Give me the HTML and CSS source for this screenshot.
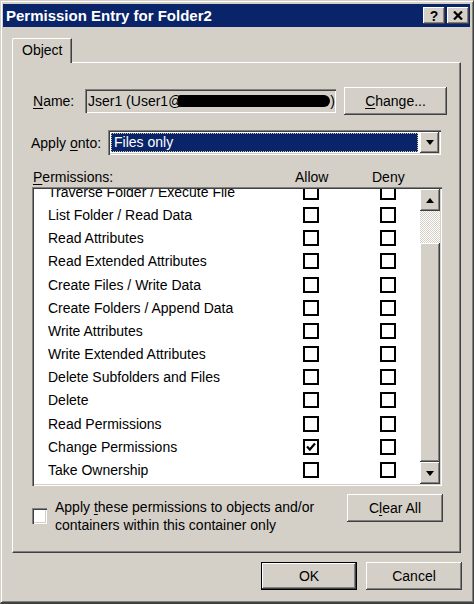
FILE: index.html
```html
<!DOCTYPE html>
<html>
<head>
<meta charset="utf-8">
<title>Permission Entry for Folder2</title>
<link rel="stylesheet" href="styles.css">
</head>
<body>
<div class="window">
  <div class="titlebar">
    <span class="title">Permission Entry for Folder2</span>
    <div class="title-btns">
      <span class="tbtn help">?</span>
      <span class="tbtn close"><svg width="10" height="9" viewBox="0 0 10 9"><path d="M1 0.5 L9 8.5 M9 0.5 L1 8.5" stroke="#000" stroke-width="2.2"/></svg></span>
    </div>
  </div>
  <div class="client">
    <div class="tabs"><div class="tab">Object</div></div>
    <div class="panel">
      <div class="name-row">
        <span class="lbl name-lbl"><u>N</u>ame:</span>
        <div class="field">Jser1 (User1@<span class="redact"></span>)</div>
        <button class="btn change-btn"><u>C</u>hange...</button>
      </div>
      <div class="apply-row">
        <span class="lbl apply-lbl">Apply <u>o</u>nto:</span>
        <div class="combo">
          <div class="combo-sel">Files only</div>
          <span class="combo-btn"><span class="tri-down"></span></span>
        </div>
      </div>
      <div class="perm-head">
        <span><u>P</u>ermissions:</span>
        <span>Allow</span>
        <span>Deny</span>
      </div>
      <div class="list">
        <div class="list-view">
          <div class="rows">
            <div class="prow"><span>Traverse Folder / Execute File</span><span class="cb"></span><span class="cb"></span></div>
            <div class="prow"><span>List Folder / Read Data</span><span class="cb"></span><span class="cb"></span></div>
            <div class="prow"><span>Read Attributes</span><span class="cb"></span><span class="cb"></span></div>
            <div class="prow"><span>Read Extended Attributes</span><span class="cb"></span><span class="cb"></span></div>
            <div class="prow"><span>Create Files / Write Data</span><span class="cb"></span><span class="cb"></span></div>
            <div class="prow"><span>Create Folders / Append Data</span><span class="cb"></span><span class="cb"></span></div>
            <div class="prow"><span>Write Attributes</span><span class="cb"></span><span class="cb"></span></div>
            <div class="prow"><span>Write Extended Attributes</span><span class="cb"></span><span class="cb"></span></div>
            <div class="prow"><span>Delete Subfolders and Files</span><span class="cb"></span><span class="cb"></span></div>
            <div class="prow"><span>Delete</span><span class="cb"></span><span class="cb"></span></div>
            <div class="prow"><span>Read Permissions</span><span class="cb"></span><span class="cb"></span></div>
            <div class="prow"><span>Change Permissions</span><span class="cb checked"><svg width="12" height="12" viewBox="0 0 12 12"><path d="M2 5.5 L4.8 8.5 L10 2.5" fill="none" stroke="#000" stroke-width="2.2"/></svg></span><span class="cb"></span></div>
            <div class="prow"><span>Take Ownership</span><span class="cb"></span><span class="cb"></span></div>
          </div>
        </div>
        <div class="vscroll">
          <span class="sbtn"><span class="tri-up"></span></span>
          <span class="strack"></span>
          <span class="sthumb"></span>
          <span class="sbtn"><span class="tri-down"></span></span>
        </div>
      </div>
      <div class="bottom-row">
        <div class="apply-check">
          <span class="chk"></span>
          <span class="chk-text">Apply <u>t</u>hese permissions to objects and/or<br>containers within this container only</span>
        </div>
        <button class="btn clear-btn">C<u>l</u>ear All</button>
      </div>
    </div>
    <div class="dlg-btns">
      <button class="btn default">OK</button>
      <button class="btn">Cancel</button>
    </div>
  </div>
</div>
</body>
</html>
```
FILE: styles.css
```css
body {
  margin: 0;
  background: #d4d0c8;
  font-family: "Liberation Sans", Arial, sans-serif;
  font-size: 14px;
  color: #000;
}

u { text-decoration: underline; text-underline-offset: 2px; }

.window {
  box-sizing: border-box;
  width: 474px;
  height: 604px;
  border: 1px solid;
  border-bottom-width: 2px;
  border-color: #d4d0c8 #404040 #404040 #d4d0c8;
  box-shadow: inset 1px 1px #fff, inset -1px -1px #808080;
  padding: 3px 3px 2px 2px;
  background: #d4d0c8;
  display: flex;
  flex-direction: column;
}

.titlebar {
  height: 23px;
  flex: none;
  background: #0a246a;
  display: flex;
  align-items: center;
  justify-content: space-between;
  padding-left: 3px;
  color: #fff;
  font-weight: bold;
  font-size: 15px;
}

.title-btns { display: flex; gap: 2px; margin-right: 1px; }

.tbtn {
  box-sizing: border-box;
  width: 22px;
  height: 17px;
  background: #d4d0c8;
  box-shadow: inset -1px -1px #404040, inset 1px 1px #fff, inset -2px -2px #808080;
  display: flex;
  align-items: center;
  justify-content: center;
  color: #000;
  font-weight: bold;
  font-size: 14px;
  line-height: 1;
}

.client {
  flex: 1;
  padding: 11px 9px 0 9px;
  display: flex;
  flex-direction: column;
}

.tabs { display: flex; position: relative; z-index: 1; }

.tab {
  box-sizing: border-box;
  width: 60px;
  height: 25px;
  border-top: 1px solid #fff;
  border-left: 1px solid #fff;
  border-right: 1px solid #404040;
  border-top-left-radius: 2px;
  box-shadow: inset -1px 0 #808080;
  padding-left: 9px;
  line-height: 22px;
  background: #d4d0c8;
}

.panel {
  box-sizing: border-box;
  height: 491px;
  margin-top: -1px;
  border: 1px solid;
  border-color: #fff #404040 #404040 #fff;
  box-shadow: inset -1px -1px #808080;
  padding: 24px 12px 0 20px;
}

.name-row { display: flex; align-items: center; height: 28px; }
.name-lbl { width: 52px; }

.field {
  box-sizing: border-box;
  width: 251px;
  height: 24px;
  background: #d4d0c8;
  box-shadow: inset 1px 1px #808080, inset 2px 2px #404040, inset -1px -1px #fff, inset -2px -2px #d4d0c8;
  padding-left: 3px;
  display: flex;
  align-items: center;
  white-space: nowrap;
  overflow: hidden;
}

.redact {
  display: inline-block;
  width: 152px;
  height: 12px;
  margin-left: -4px;
  background: #000;
  border-radius: 3px 7px 7px 3px;
}

.btn {
  font: inherit;
  box-sizing: border-box;
  background: #d4d0c8;
  border: 0;
  box-shadow: inset -1px -1px #404040, inset 1px 1px #fff, inset -2px -2px #808080;
  padding: 0;
  color: #000;
  height: 28px;
}

.change-btn { width: 103px; margin-left: 8px; }

.apply-row { display: flex; align-items: center; height: 25px; margin-top: 15px; }
.apply-lbl { width: 77px; margin-left: -2px; }

.combo {
  box-sizing: border-box;
  width: 333px;
  height: 25px;
  background: #fff;
  box-shadow: inset 1px 1px #808080, inset 2px 2px #404040, inset -1px -1px #fff, inset -2px -2px #d4d0c8;
  padding: 2px;
  display: flex;
}

.combo-sel {
  flex: 1;
  margin: 1px 2px 1px 1px;
  background: #0a246a;
  color: #fff;
  outline: 1px dotted #c8c8a0;
  outline-offset: -1px;
  padding-left: 3px;
  line-height: 19px;
}

.combo-btn {
  box-sizing: border-box;
  width: 19px;
  background: #d4d0c8;
  box-shadow: inset -1px -1px #404040, inset 1px 1px #fff, inset -2px -2px #808080;
  display: flex;
  align-items: center;
  justify-content: center;
}

.tri-down {
  width: 0;
  height: 0;
  border-left: 4.5px solid transparent;
  border-right: 4.5px solid transparent;
  border-top: 5px solid #000;
}

.tri-up {
  width: 0;
  height: 0;
  border-left: 4.5px solid transparent;
  border-right: 4.5px solid transparent;
  border-bottom: 5px solid #000;
}

.perm-head {
  box-sizing: border-box;
  margin-top: 14px;
  height: 18px;
  padding-top: 1px;
  line-height: 15px;
  display: grid;
  grid-template-columns: 262px 77px auto;
}

.list {
  box-sizing: border-box;
  width: 410px;
  height: 299px;
  margin-left: -1px;
  background: #fff;
  box-shadow: inset 1px 1px #808080, inset 2px 2px #404040, inset -1px -1px #fff, inset -2px -2px #d4d0c8;
  padding: 2px;
  display: flex;
}

.list-view { flex: 1; overflow: hidden; }

.rows { margin-top: -8.8px; }

.prow {
  height: 23.2px;
  display: grid;
  grid-template-columns: 255px 77px 16px;
  align-items: center;
  padding-left: 14px;
  white-space: nowrap;
  line-height: 14px;
}

.cb {
  box-sizing: border-box;
  width: 16px;
  height: 16px;
  border: 2px solid #000;
  background: #fff;
  display: flex;
  align-items: center;
  justify-content: center;
}

.vscroll {
  width: 20px;
  display: flex;
  flex-direction: column;
}

.sbtn {
  box-sizing: border-box;
  height: 22px;
  flex: none;
  background: #d4d0c8;
  box-shadow: inset -1px -1px #404040, inset 1px 1px #fff, inset -2px -2px #808080;
  display: flex;
  align-items: center;
  justify-content: center;
}

.strack {
  height: 32px;
  flex: none;
  background: repeating-conic-gradient(#d4d0c8 0 25%, #fff 0 50%) 0 0 / 2px 2px;
}

.sthumb {
  flex: 1;
  background: #d4d0c8;
  box-shadow: inset -1px -1px #404040, inset 1px 1px #fff, inset -2px -2px #808080;
}

.bottom-row {
  margin-top: 8px;
  display: flex;
  justify-content: space-between;
  align-items: flex-start;
}

.apply-check { display: flex; margin-left: -1px; }

.chk {
  box-sizing: border-box;
  width: 15px;
  height: 16px;
  margin-top: 14px;
  background: #fff;
  box-shadow: inset 1px 1px #808080, inset 2px 2px #404040, inset -1px -1px #fff, inset -2px -2px #d4d0c8;
}

.chk-text {
  margin-left: 8px;
  padding-top: 5px;
  line-height: 17.5px;
}

.clear-btn { width: 96px; margin-right: 5px; }

.dlg-btns {
  margin-top: 9px;
  margin-right: -1px;
  display: flex;
  justify-content: flex-end;
  gap: 9px;
}

.dlg-btns .btn { width: 96px; }

.btn.default { border: 1px solid #000; }
```
